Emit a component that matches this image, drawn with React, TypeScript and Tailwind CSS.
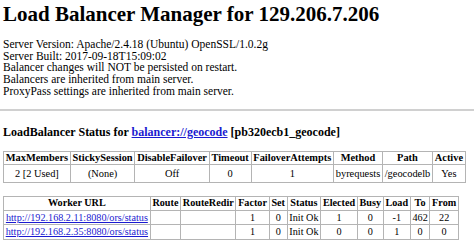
const lbHeaders = ["MaxMembers", "StickySession", "DisableFailover", "Timeout", "FailoverAttempts", "Method", "Path", "Active"];
const lbRow = ["2 [2 Used]", "(None)", "Off", "0", "1", "byrequests", "/geocodelb", "Yes"];

const workerHeaders = ["Worker URL", "Route", "RouteRedir", "Factor", "Set", "Status", "Elected", "Busy", "Load", "To", "From"];
const workers = [
  { url: "http://192.168.2.11:8080/ors/status", cells: ["", "", "1", "0", "Init Ok", "1", "0", "-1", "462", "22"] },
  { url: "http://192.168.2.35:8080/ors/status", cells: ["", "", "1", "0", "Init Ok", "0", "0", "1", "0", "0"] },
];

// cell styles, borders look solid light grey at this size
const cell = "border border-[#b4b4b4] text-center whitespace-nowrap";

export default function App() {
  return (
    <div className="font-['Liberation_Serif',serif] min-h-screen bg-white px-[3px] text-black text-[11.5px] leading-[11.7px]">
      <h1 className="pt-[2px] text-[21px] leading-[24px] font-bold whitespace-nowrap">
        Load Balancer Manager for 129.206.7.206
      </h1>

      <div className="mt-[13px] whitespace-nowrap">
        <div>Server Version: Apache/2.4.18 (Ubuntu) OpenSSL/1.0.2g</div>
        <div>Server Built: 2017-09-18T15:09:02</div>
        <div>Balancer changes will NOT be persisted on restart.</div>
        <div>Balancers are inherited from main server.</div>
        <div>ProxyPass settings are inherited from main server.</div>
      </div>

      <hr className="mt-[11px] -mx-[3px] border-t-2 border-[#d0d0d0]" />

      <h3 className="mt-[14px] text-[12px] leading-[14px] font-bold whitespace-nowrap">
        LoadBalancer Status for{" "}
        <a href="#" className="text-[#1a1ad0] underline">balancer://geocode</a> [pb320ecb1_geocode]
      </h3>

      <table className="mt-[12px] border-collapse border border-[#b4b4b4] text-[10.4px]">
        <thead>
          <tr>
            {lbHeaders.map((h) => (
              <th key={h} className={cell + " px-[1.75px] py-[0.5px] font-bold"}>{h}</th>
            ))}
          </tr>
        </thead>
        <tbody>
          <tr>
            {lbRow.map((c, i) => (
              <td key={i} className={cell + " px-[1.75px] py-[2.5px]"}>{c}</td>
            ))}
          </tr>
        </tbody>
      </table>

      <table className="mt-[13px] border-collapse border border-[#b4b4b4] text-[10.2px]">
        <thead>
          <tr>
            {workerHeaders.map((h) => (
              <th key={h} className={cell + " px-[1.7px] py-[0.5px] font-bold"}>{h}</th>
            ))}
          </tr>
        </thead>
        <tbody>
          {workers.map((w) => (
            <tr key={w.url}>
              <td className={cell + " px-[1.7px] py-[1px]"}>
                <a href="#" className="text-[#1a1ad0] underline">{w.url}</a>
              </td>
              {w.cells.map((c, i) => (
                <td key={i} className={cell + " px-[1.7px] py-[1px]"}>{c}</td>
              ))}
            </tr>
          ))}
        </tbody>
      </table>
    </div>
  );
}
